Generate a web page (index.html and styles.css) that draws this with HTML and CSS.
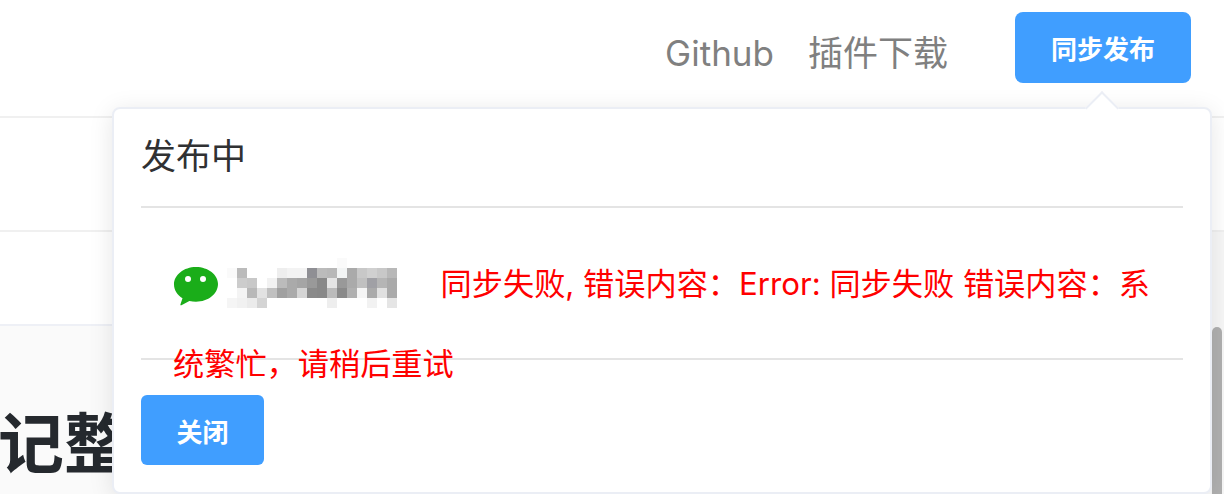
FILE: index.html
```html
<!DOCTYPE html>
<html lang="zh-CN">
<head>
<meta charset="utf-8">
<title>同步发布</title>
<link rel="stylesheet" href="styles.css">
</head>
<body>
<div class="page">
  <header class="topbar">
    <nav class="nav">
      <a class="nav-link">Github</a>
      <a class="nav-link">插件下载</a>
    </nav>
    <button class="btn btn-sync">同步发布</button>
  </header>
  <div class="band band-a"></div>
  <div class="band band-b"></div>
  <main class="content">
    <h1 class="title">记整</h1>
  </main>
</div>
<div class="scrollbar"><div class="thumb"></div></div>
<section class="popover">
  <span class="arrow"></span>
  <h2 class="pop-title">发布中</h2>
  <div class="pop-body">
    <div class="message">
      <svg class="wechat" width="46" height="40" viewBox="0 0 46 40">
        <path fill="#1aad19" d="M23 1C10.800 1 1 8.900 1 18.500c0 5.700 3.300 10.500 8.500 13.700L7.400 38.600c-.2.700.4 1 1 .7l8-4.400c2.100.5 4.300.8 6.600.8 12.200 0 22-7.800 22-17.700C45 8.900 35.200 1 23 1z"/>
        <circle cx="15" cy="13" r="3" fill="#fff"/>
        <circle cx="30" cy="13" r="3" fill="#fff"/>
      </svg>
      <svg class="blur" width="170" height="50" viewBox="0 0 17 5" shape-rendering="crispEdges">
        <rect x="11" y="0" width="1" height="1" fill="#fafafa"/>
        <rect x="0" y="1" width="1" height="1" fill="#fafafa"/><rect x="1" y="1" width="1" height="1" fill="#bbb"/><rect x="5" y="1" width="1" height="1" fill="#eee"/><rect x="6" y="1" width="2" height="1" fill="#f3f3f3"/><rect x="8" y="1" width="1" height="1" fill="#8f8f94"/><rect x="9" y="1" width="1" height="1" fill="#bbb"/><rect x="10" y="1" width="1" height="1" fill="#b8b8b8"/><rect x="11" y="1" width="1" height="1" fill="#f2f4f4"/><rect x="12" y="1" width="1" height="1" fill="#aaa"/><rect x="13" y="1" width="1" height="1" fill="#c8c8c8"/><rect x="14" y="1" width="1" height="1" fill="#d0d0d0"/><rect x="15" y="1" width="1" height="1" fill="#c8c8c8"/><rect x="16" y="1" width="1" height="1" fill="#b8b8b8"/>
        <rect x="1" y="2" width="1" height="1" fill="#ccc"/><rect x="2" y="2" width="1" height="1" fill="#c8c8c8"/><rect x="4" y="2" width="1" height="1" fill="#f2f2f2"/><rect x="5" y="2" width="1" height="1" fill="#bbb"/><rect x="6" y="2" width="1" height="1" fill="#aaa"/><rect x="7" y="2" width="1" height="1" fill="#a5a5a5"/><rect x="8" y="2" width="1" height="1" fill="#999"/><rect x="9" y="2" width="1" height="1" fill="#888"/><rect x="10" y="2" width="1" height="1" fill="#e5e5e5"/><rect x="11" y="2" width="1" height="1" fill="#999"/><rect x="12" y="2" width="1" height="1" fill="#aaa"/><rect x="13" y="2" width="1" height="1" fill="#c0c0c0"/><rect x="14" y="2" width="1" height="1" fill="#a0a0a5"/><rect x="15" y="2" width="1" height="1" fill="#b5b5b5"/><rect x="16" y="2" width="1" height="1" fill="#aaa"/>
        <rect x="1" y="3" width="1" height="1" fill="#f4f4f4"/><rect x="2" y="3" width="1" height="1" fill="#b8b8b8"/><rect x="3" y="3" width="1" height="1" fill="#e2e2e2"/><rect x="4" y="3" width="1" height="1" fill="#c0c0c0"/><rect x="5" y="3" width="1" height="1" fill="#a0a0a0"/><rect x="6" y="3" width="1" height="1" fill="#aaa"/><rect x="7" y="3" width="1" height="1" fill="#d5d5d5"/><rect x="8" y="3" width="1" height="1" fill="#8a8a8a"/><rect x="9" y="3" width="1" height="1" fill="#888"/><rect x="10" y="3" width="1" height="1" fill="#bbb"/><rect x="11" y="3" width="1" height="1" fill="#8a8a8a"/><rect x="12" y="3" width="1" height="1" fill="#b0b0b0"/><rect x="13" y="3" width="1" height="1" fill="#f5f5f5"/><rect x="14" y="3" width="1" height="1" fill="#aaa"/><rect x="15" y="3" width="1" height="1" fill="#e0e0e0"/><rect x="16" y="3" width="1" height="1" fill="#aaa"/>
        <rect x="0" y="4" width="1" height="1" fill="#f5f5f5"/><rect x="1" y="4" width="1" height="1" fill="#f1f1f1"/><rect x="2" y="4" width="1" height="1" fill="#ebebeb"/><rect x="3" y="4" width="1" height="1" fill="#d4d4d4"/><rect x="10" y="4" width="1" height="1" fill="#eee"/><rect x="14" y="4" width="1" height="1" fill="#f2f2f2"/><rect x="16" y="4" width="1" height="1" fill="#e5e5e5"/>
      </svg>
      <span class="error">同步失败, 错误内容：Error: 同步失败 错误内容：系统繁忙，请稍后重试</span>
    </div>
  </div>
  <footer class="pop-footer">
    <button class="btn btn-close">关闭</button>
  </footer>
</section>
</body>
</html>
```
FILE: styles.css
```css
* { box-sizing: border-box; }
html, body {
  margin: 0;
  height: 494px;
  overflow: hidden;
  background: #fff;
  font-family: "Inter", "Noto Sans CJK SC", sans-serif;
}
.page {
  display: flex;
  flex-direction: column;
  height: 494px;
}
.topbar {
  height: 118px;
  flex: none;
  display: flex;
  align-items: flex-start;
  justify-content: flex-end;
  padding: 12px 33px 0 0;
  border-bottom: 2px solid #f0f0f0;
}
.nav {
  display: flex;
  gap: 34px;
  margin-right: 67px;
  padding-top: 20px;
}
.nav-link {
  font-size: 35px;
  line-height: 42px;
  color: #808080;
}
.btn {
  border: 0;
  color: #fff;
  background: #409eff;
  font-family: "Noto Sans CJK SC", sans-serif;
  font-weight: 700;
  font-size: 26px;
  padding: 0;
}
.btn-sync {
  width: 176px;
  height: 71px;
  border-radius: 8px;
}
.band { flex: none; border-bottom: 2px solid #f0f0f0; }
.band-a { height: 114px; }
.band-b { height: 94px; border-bottom-color: #eef0f6; }
.content {
  flex: 1;
  background: #fafafa;
  overflow: hidden;
  padding: 68px 0 0 0;
}
.title {
  margin: 0 0 0 -2px;
  font-family: "Noto Sans CJK SC", sans-serif;
  font-size: 66px;
  line-height: 90px;
  font-weight: 700;
  color: #25292e;
  white-space: nowrap;
}
.scrollbar {
  position: absolute;
  top: 232px;
  right: 0;
  width: 13px;
  height: 262px;
  padding: 0 2px 0 1px;
  background: #f7f7f7;
}
.thumb {
  margin-top: 95px;
  height: 167px;
  background: #b0b0b0;
  border-radius: 5px 5px 0 0;
}
.popover {
  position: absolute;
  left: 112px;
  top: 107px;
  width: 1100px;
  height: 387px;
  padding: 0 27px;
  background: #fff;
  border: 2px solid #ebeef5;
  border-radius: 8px;
  box-shadow: 0 4px 24px rgba(0, 0, 0, .1);
}
.arrow {
  position: absolute;
  top: -13px;
  left: 976px;
  width: 24px;
  height: 24px;
  background: #fff;
  border: 2px solid #ebeef5;
  border-right: 0;
  border-bottom: 0;
  transform: rotate(45deg);
}
.pop-title {
  margin: 0;
  height: 99px;
  padding-top: 22px;
  font-size: 35px;
  line-height: 50px;
  font-weight: 400;
  color: #303133;
  border-bottom: 2px solid #e4e4e4;
}
.pop-body {
  height: 152px;
  padding: 36px 0 0 32px;
  border-bottom: 2px solid #e4e4e4;
}
.message {
  font-size: 31.200px;
  line-height: 80px;
  margin-right: 28px;
  color: #f00;
}
.wechat { vertical-align: middle; margin: -1px 8px 0 0; }
.blur { vertical-align: middle; margin: -6px 0 0 -9px; }
.error { margin-left: 35px; }
.pop-footer { padding-top: 35px; }
.btn-close {
  width: 123px;
  height: 70px;
  border-radius: 6px;
}
```
